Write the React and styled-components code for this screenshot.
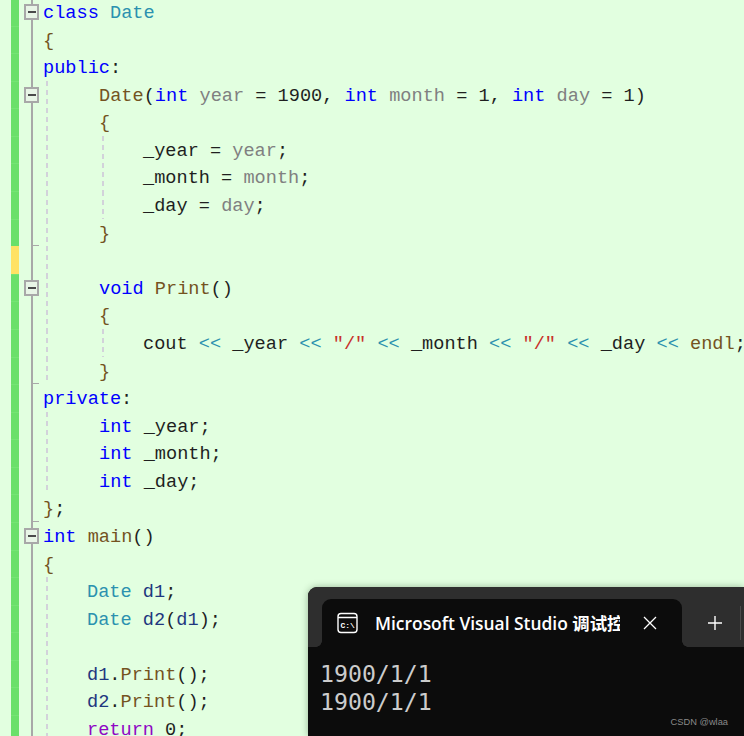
import React from 'react';
import styled, { createGlobalStyle } from 'styled-components';

const GlobalStyle = createGlobalStyle`
  html, body {
    margin: 0;
    padding: 0;
    background: #e2ffe0;
  }
`;

const colors = {
  kw: '#0000ff',
  type: '#2b91af',
  fn: '#74531f',
  param: '#808080',
  member: '#1f1f1f',
  local: '#1f377f',
  str: '#c8312b',
  op: '#2b91af',
  ctl: '#8f08c4',
  plain: '#1f1f1f',
};

// k/t/f/... short names keep the table below readable
const k = (text) => ['kw', text];
const ty = (text) => ['type', text];
const f = (text) => ['fn', text];
const p = (text) => ['param', text];
const m = (text) => ['member', text];
const l = (text) => ['local', text];
const s = (text) => ['str', text];
const o = (text) => ['op', text];
const c = (text) => ['ctl', text];
const t = (text) => ['plain', text];

const lines = [
  { x: 43, fold: 'box', code: [k('class'), t(' '), ty('Date')] },
  { x: 43, fold: 'line', code: [f('{')] },
  { x: 43, fold: 'line', code: [k('public'), t(':')] },
  { x: 99, fold: 'box', g1: true, code: [f('Date'), t('('), k('int'), t(' '), p('year'), t(' = 1900, '), k('int'), t(' '), p('month'), t(' = 1, '), k('int'), t(' '), p('day'), t(' = 1)')] },
  { x: 99, fold: 'line', g1: true, code: [f('{')] },
  { x: 143, fold: 'line', g1: true, g2: true, code: [m('_year'), t(' = '), p('year'), t(';')] },
  { x: 143, fold: 'line', g1: true, g2: true, code: [m('_month'), t(' = '), p('month'), t(';')] },
  { x: 143, fold: 'line', g1: true, g2: true, code: [m('_day'), t(' = '), p('day'), t(';')] },
  { x: 99, fold: 'tick', g1: true, code: [f('}')] },
  { x: 99, fold: 'line', g1: true, mark: 'edit', code: [] },
  { x: 99, fold: 'box', g1: true, code: [k('void'), t(' '), f('Print'), t('()')] },
  { x: 99, fold: 'line', g1: true, code: [f('{')] },
  { x: 143, fold: 'line', g1: true, g2: true, code: [t('cout '), o('<<'), t(' '), m('_year'), t(' '), o('<<'), t(' '), s('"/"'), t(' '), o('<<'), t(' '), m('_month'), t(' '), o('<<'), t(' '), s('"/"'), t(' '), o('<<'), t(' '), m('_day'), t(' '), o('<<'), t(' '), f('endl'), t(';')] },
  { x: 99, fold: 'tick', g1: true, code: [f('}')] },
  { x: 43, fold: 'line', code: [k('private'), t(':')] },
  { x: 99, fold: 'line', g1: true, code: [k('int'), t(' '), m('_year'), t(';')] },
  { x: 99, fold: 'line', g1: true, code: [k('int'), t(' '), m('_month'), t(';')] },
  { x: 99, fold: 'line', g1: true, code: [k('int'), t(' '), m('_day'), t(';')] },
  { x: 43, fold: 'end', code: [f('}'), t(';')] },
  { x: 43, fold: 'box', code: [k('int'), t(' '), f('main'), t('()')] },
  { x: 43, fold: 'line', code: [f('{')] },
  { x: 87, fold: 'line', g1: true, code: [ty('Date'), t(' '), l('d1'), t(';')] },
  { x: 87, fold: 'line', g1: true, code: [ty('Date'), t(' '), l('d2'), t('('), l('d1'), t(');')] },
  { x: 87, fold: 'line', g1: true, code: [] },
  { x: 87, fold: 'line', g1: true, code: [l('d1'), t('.'), f('Print'), t('();')] },
  { x: 87, fold: 'line', g1: true, code: [l('d2'), t('.'), f('Print'), t('();')] },
  { x: 87, fold: 'line', g1: true, code: [c('return'), t(' 0;')] },
];

const Page = styled.div`
  position: relative;
  width: 744px;
  height: 736px;
  overflow: hidden;
  background: #e2ffe0;
`;

const Editor = styled.div`
  display: flex;
  flex-direction: column;
  margin-top: -2px;
`;

const Row = styled.div`
  position: relative;
  display: flex;
  height: 27.58px;
  padding-left: 11px;
`;

const ChangeBar = styled.div`
  flex: none;
  width: 8px;
  margin-right: 5px;
  background: ${(props) => (props.$mark === 'edit' ? '#ffe264' : '#6ae06a')};
  box-shadow: inset 0 1px 0 ${(props) => (props.$mark === 'edit' ? '#ffe264' : '#74e474')};
`;

const FoldCell = styled.div`
  position: relative;
  flex: none;
  width: 15px;

  /* vertical rule of the outline */
  &::before {
    content: '';
    position: absolute;
    left: 7px;
    top: 0;
    width: 2px;
    height: 100%;
    background: #a8a8a8;
  }

  /* little tick where a block closes */
  &::after {
    content: ${(props) => (props.$fold === 'tick' || props.$fold === 'end' ? "''" : 'none')};
    position: absolute;
    left: 7px;
    bottom: 0;
    width: 8px;
    height: 1px;
    background: #a8a8a8;
  }
`;

const FoldBox = styled.div`
  position: absolute;
  z-index: 1;
  left: 0;
  top: 6px;
  box-sizing: border-box;
  width: 15px;
  height: 16px;
  border: 2px solid #a8a8a8;
  background: #e8f5e6;

  &::after {
    content: '';
    position: absolute;
    left: 2px;
    top: 5px;
    width: 8px;
    height: 2px;
    background: #4a4a4a;
  }
`;

const Guide = styled.div`
  position: absolute;
  top: 0;
  bottom: 0;
  left: ${(props) => props.$x}px;
  width: 2px;
  background: repeating-linear-gradient(to bottom, #d2d2da 0 5px, transparent 5px 9px);
`;

const Code = styled.pre`
  flex: none;
  margin: 0;
  padding: 2px 0 0 ${(props) => props.$x - 39}px;
  font-family: 'Liberation Mono', monospace;
  font-size: 18.6px;
  line-height: 27.58px;
  color: #1f1f1f;
  white-space: pre;
`;

const Tok = styled.span`
  color: ${(props) => colors[props.$kind]};
`;

const Terminal = styled.div`
  position: absolute;
  left: 308px;
  top: 587px;
  width: 436px;
  height: 149px;
  display: flex;
  flex-direction: column;
  background: #0c0c0c;
  border-top-left-radius: 9px;
  box-shadow: 0 0 7px rgba(40, 70, 40, 0.4);
  overflow: hidden;
`;

const TitleBar = styled.div`
  flex: none;
  display: flex;
  align-items: flex-end;
  height: 60px;
  padding-left: 14px;
  background: #2e2e2e;
`;

const Tab = styled.div`
  position: relative;
  flex: none;
  display: flex;
  align-items: center;
  box-sizing: border-box;
  width: 360px;
  height: 48px;
  padding: 0 0 0 15px;
  background: #0c0c0c;
  border-radius: 9px 9px 0 0;

  &::before,
  &::after {
    content: '';
    position: absolute;
    bottom: 0;
    width: 6px;
    height: 6px;
  }

  &::before {
    left: -6px;
    background: radial-gradient(circle at 0 0, transparent 5.5px, #0c0c0c 6px);
  }

  &::after {
    right: -6px;
    background: radial-gradient(circle at 100% 0, transparent 5.5px, #0c0c0c 6px);
  }
`;

const TabIcon = styled.svg`
  flex: none;
  width: 22px;
  height: 22px;
  margin-right: 16px;
`;

const TabTitle = styled.div`
  flex: none;
  width: 245px;
  padding-bottom: 2px;
  overflow: hidden;
  white-space: nowrap;
  font-family: 'Open Sans', 'Noto Sans CJK SC', sans-serif;
  font-size: 17.4px;
  font-weight: 600;
  color: #fff;
`;

const CloseIcon = styled.svg`
  flex: none;
  width: 14px;
  height: 14px;
  margin-left: 23px;
`;

const PlusIcon = styled.svg`
  flex: none;
  width: 16px;
  height: 16px;
  margin: 0 0 16px 25px;
`;

const Divider = styled.div`
  flex: none;
  width: 1px;
  height: 34px;
  margin: 0 0 7px 17px;
  background: #4a4a4a;
`;

const Output = styled.pre`
  margin: 0;
  padding: 13px 0 0 12px;
  font-family: 'DejaVu Sans Mono', monospace;
  font-size: 23.2px;
  line-height: 28px;
  color: #cccccc;
`;

const Watermark = styled.div`
  position: absolute;
  right: 16px;
  bottom: 9px;
  font-family: 'Liberation Sans', sans-serif;
  font-size: 9.3px;
  color: #8a8a8a;
`;

const App = () => {
  return (
    <Page>
      <GlobalStyle />
      <Editor>
        {lines.map((line, i) => (
          <Row key={i}>
            <ChangeBar $mark={line.mark} />
            <FoldCell $fold={line.fold}>{line.fold === 'box' && <FoldBox />}</FoldCell>
            {line.g1 && <Guide $x={46} />}
            {line.g2 && <Guide $x={102} />}
            <Code $x={line.x}>
              {line.code.length === 0
                ? ' '
                : line.code.map(([kind, text], j) => (
                    <Tok key={j} $kind={kind}>
                      {text}
                    </Tok>
                  ))}
            </Code>
          </Row>
        ))}
      </Editor>
      <Terminal>
        <TitleBar>
          <Tab>
            <TabIcon viewBox="0 0 22 22" fill="none">
              <rect x="1" y="1.5" width="19" height="19" rx="3" stroke="#fff" strokeWidth="1.4" />
              <path d="M1 5.5h19" stroke="#fff" strokeWidth="1.4" />
              <text x="3.4" y="15.5" fontFamily="'Liberation Mono', monospace" fontSize="8" fontWeight="700" fill="#fff">
                C:\
              </text>
            </TabIcon>
            <TabTitle>Microsoft Visual Studio 调试控制台</TabTitle>
            <CloseIcon viewBox="0 0 14 14" fill="none">
              <path d="M1 1l12 12M13 1L1 13" stroke="#fff" strokeWidth="1.3" />
            </CloseIcon>
          </Tab>
          <PlusIcon viewBox="0 0 16 16" fill="none">
            <path d="M8 1v14M1 8h14" stroke="#fff" strokeWidth="1.4" />
          </PlusIcon>
          <Divider />
        </TitleBar>
        <Output>{'1900/1/1\n1900/1/1'}</Output>
        <Watermark>CSDN @wlaa</Watermark>
      </Terminal>
    </Page>
  );
};

export default App;
